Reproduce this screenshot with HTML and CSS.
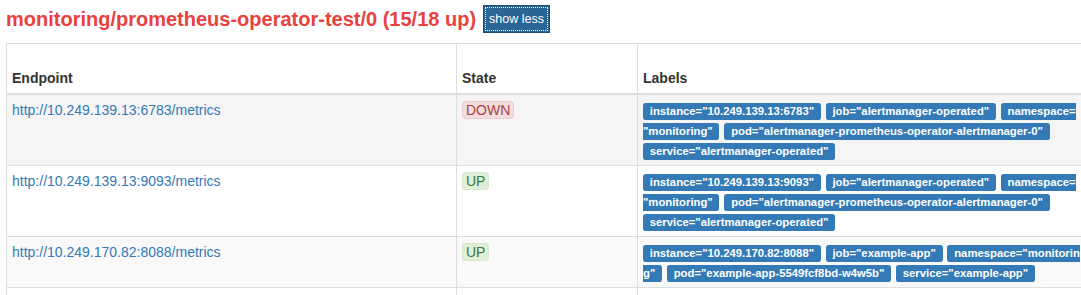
FILE: index.html
```
<!DOCTYPE html>
<html lang="en">
<head>
<meta charset="utf-8">
<title>Targets</title>
<link rel="stylesheet" href="styles.css">
</head>
<body>
<div class="page">
  <h2 class="job-header">
    <a class="job-link danger" href="#job-monitoring">monitoring/prometheus-operator-test/0 (15/18 up)</a>
    <button class="btn-toggle" type="button">show less</button>
  </h2>
  <table class="targets">
    <colgroup>
      <col class="col-endpoint">
      <col class="col-state">
      <col class="col-labels">
    </colgroup>
    <thead>
      <tr>
        <th>Endpoint</th>
        <th>State</th>
        <th class="last">Labels</th>
      </tr>
    </thead>
    <tbody>
      <tr class="row-hover">
        <td><a class="endpoint" href="#">http://10.249.139.13:6783/metrics</a></td>
        <td><span class="state state-down">DOWN</span></td>
        <td class="labels last"><span class="label">instance="10.249.139.13:6783"</span> <span class="label">job="alertmanager-operated"</span> <span class="label">namespace=<br>"monitoring"</span> <span class="label">pod="alertmanager-prometheus-operator-alertmanager-0"</span> <span class="label">service="alertmanager-operated"</span></td>
      </tr>
      <tr>
        <td><a class="endpoint" href="#">http://10.249.139.13:9093/metrics</a></td>
        <td><span class="state state-up">UP</span></td>
        <td class="labels last"><span class="label">instance="10.249.139.13:9093"</span> <span class="label">job="alertmanager-operated"</span> <span class="label">namespace=<br>"monitoring"</span> <span class="label">pod="alertmanager-prometheus-operator-alertmanager-0"</span> <span class="label">service="alertmanager-operated"</span></td>
      </tr>
      <tr class="row-striped">
        <td><a class="endpoint" href="#">http://10.249.170.82:8088/metrics</a></td>
        <td><span class="state state-up">UP</span></td>
        <td class="labels last"><span class="label">instance="10.249.170.82:8088"</span> <span class="label">job="example-app"</span> <span class="label">namespace="monitorin<br>g"</span> <span class="label">pod="example-app-5549fcf8bd-w4w5b"</span> <span class="label">service="example-app"</span></td>
      </tr>
      <tr class="row-empty">
        <td></td>
        <td></td>
        <td class="last"></td>
      </tr>
    </tbody>
  </table>
</div>
</body>
</html>
```
FILE: styles.css
```
html, body {
  margin: 0;
  padding: 0;
  overflow: hidden;
  background: #fff;
}

body {
  font-family: "Liberation Sans", Arial, sans-serif;
  font-size: 14px;
  line-height: 20px;
  color: #333;
}

.page {
  padding: 5px 0 0 6px;
}

.job-header {
  display: flex;
  align-items: center;
  height: 28px;
  margin: 0 0 10px;
  font-size: 20px;
  line-height: 28px;
  font-weight: bold;
}

.job-link {
  text-decoration: none;
}

.danger {
  color: #e8413e;
}

.btn-toggle {
  margin-left: 7px;
  height: 28px;
  padding: 0 5px;
  font-family: "Liberation Sans", Arial, sans-serif;
  font-size: 12.5px;
  line-height: 18px;
  color: #fff;
  background: #2b6496;
  border: 1px solid #204d74;
  border-radius: 0;
  outline: 1px dotted #fff;
  outline-offset: -3px;
}

.targets {
  width: 1110px;
  border-collapse: collapse;
  border-spacing: 0;
  table-layout: fixed;
  border: 1px solid #ddd;
  border-right: 0;
}

.col-endpoint { width: 450px; }
.col-state { width: 181px; }

.targets th,
.targets td {
  border: 1px solid #ddd;
  text-align: left;
  vertical-align: top;
  padding: 5px;
}

.targets th {
  padding-top: 24px;
  vertical-align: bottom;
  font-weight: bold;
  color: #333;
  border-bottom: 2px solid #ddd;
}

.targets .last {
  border-right: 0;
}

.row-hover td { background: #f5f5f5; }
.row-striped td { background: #f9f9f9; }

.row-empty td {
  height: 20px;
}

.endpoint {
  color: #337ab7;
  text-decoration: none;
}

.state {
  padding: 0 3px;
  border: 1px solid transparent;
  border-radius: 4px;
}

.state-down {
  color: #a94442;
  background: #f2dede;
  border-color: #ebccd1;
}

.state-up {
  color: #3c763d;
  background: #dff0d8;
  border-color: #d6e9c6;
}

.label {
  padding: 0.22em 0.6em 0.3em;
  margin-right: 1px;
  font-size: 11.3px;
  line-height: 1;
  font-weight: bold;
  color: #fff;
  background: #337ab7;
  border-radius: 0.25em;
  white-space: nowrap;
}
```
